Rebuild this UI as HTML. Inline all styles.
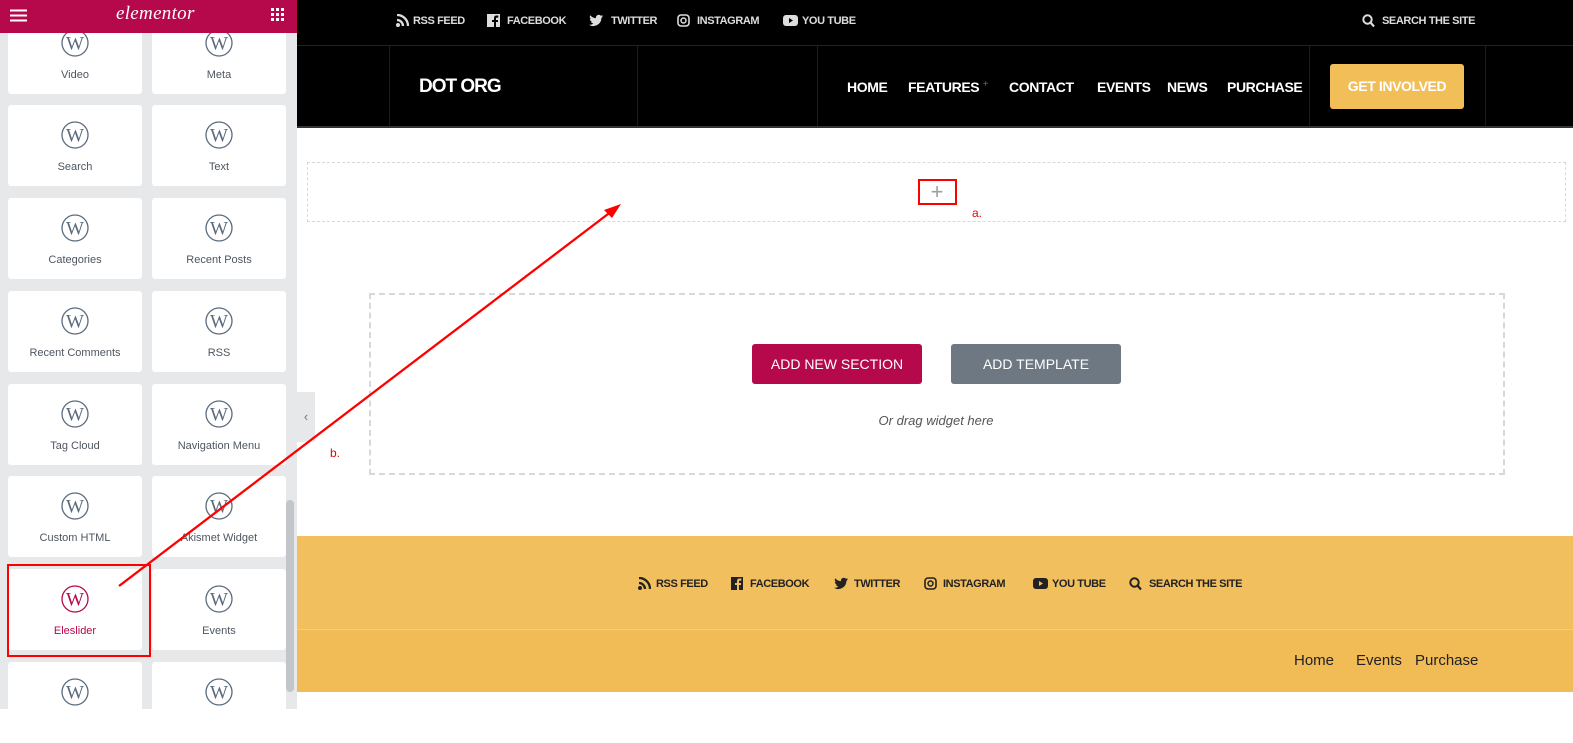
<!DOCTYPE html>
<html><head><meta charset="utf-8"><style>
*{margin:0;padding:0;box-sizing:border-box}
body{width:1573px;height:709px;overflow:hidden;background:#fff;font-family:"Liberation Sans",sans-serif;position:relative}
.a{position:absolute}
.side{left:0;top:0;width:297px;height:709px;background:#e6e8ea}
.hdr{left:0;top:0;width:297px;height:33px;background:#b5094b}
.card{position:absolute;width:134px;height:81px;background:#fff;border-radius:3px;text-align:center;font-size:11px;color:#4e5660}
.card svg{position:absolute;left:53px;top:16px}
.card span{position:absolute;left:0;right:0;top:56px}
.s{position:absolute;font-size:11px;font-weight:bold;letter-spacing:-0.4px;white-space:nowrap}
.tb .s{color:#ddd;top:15px}
.ft .s{color:#222;top:578px}
.ic{position:absolute}
.nav{color:#fff;font-weight:bold;font-size:14px;letter-spacing:-0.4px;position:absolute;top:79px}
</style></head><body>
<!-- header -->
<div class="a" style="left:297px;top:0;width:1276px;height:127px;background:#000"></div>
<div class="a" style="left:297px;top:45px;width:1276px;height:1px;background:#222"></div>
<div class="a" style="left:389px;top:46px;width:1px;height:80px;background:#1c1c1c"></div>
<div class="a" style="left:637px;top:46px;width:1px;height:80px;background:#1c1c1c"></div>
<div class="a" style="left:817px;top:46px;width:1px;height:80px;background:#1c1c1c"></div>
<div class="a" style="left:1309px;top:46px;width:1px;height:80px;background:#1c1c1c"></div>
<div class="a" style="left:1485px;top:46px;width:1px;height:80px;background:#1c1c1c"></div>
<div class="a" style="left:297px;top:126px;width:1276px;height:2px;background:#333"></div>
<div class="tb">
<svg class="ic" style="left:396px;top:14px" width="13" height="13"><circle cx="2" cy="11" r="2" fill="#ddd"/><path d="M1 6a6 6 0 0 1 6 6M1 1a11 11 0 0 1 11 11" stroke="#ddd" stroke-width="2.3" fill="none"/></svg><div class="s" style="left:413px">RSS FEED</div>
<svg class="ic" style="left:487px;top:14px" width="13" height="13"><rect width="13" height="13" fill="#ddd"/><path d="M9 13V8h2V6H9V4.5c0-.6.3-.9 1-.9h1.3V1.5H9.5C7.8 1.5 7 2.5 7 4v2H5v2h2v5z" fill="#000"/></svg><div class="s" style="left:507px">FACEBOOK</div>
<svg class="ic" style="left:589px;top:14px" width="15" height="13"><path d="M14 2c-.5.3-1 .4-1.6.5.6-.4 1-.9 1.2-1.5-.5.3-1.1.5-1.8.7A2.8 2.8 0 0 0 7 4.2 8 8 0 0 1 1.2 1.3a2.8 2.8 0 0 0 .9 3.8c-.5 0-.9-.2-1.3-.4 0 1.4 1 2.5 2.3 2.8-.4.1-.9.1-1.3 0 .4 1.1 1.4 1.9 2.6 2A5.7 5.7 0 0 1 0 10.7 8 8 0 0 0 12.4 4c.6-.4 1.1-1 1.6-2z" fill="#ddd"/></svg><div class="s" style="left:611px">TWITTER</div>
<svg class="ic" style="left:677px;top:14px" width="13" height="13"><rect x="1" y="1" width="11" height="11" rx="3" stroke="#ddd" stroke-width="1.6" fill="none"/><circle cx="6.5" cy="6.5" r="2.5" stroke="#ddd" stroke-width="1.5" fill="none"/></svg><div class="s" style="left:697px">INSTAGRAM</div>
<svg class="ic" style="left:783px;top:15px" width="15" height="11"><rect width="15" height="11" rx="3" fill="#ddd"/><path d="M6 3v5l4-2.5z" fill="#000"/></svg><div class="s" style="left:802px">YOU TUBE</div>
<svg class="ic" style="left:1362px;top:14px" width="13" height="14"><circle cx="5.5" cy="5.5" r="4.2" stroke="#ddd" stroke-width="2" fill="none"/><path d="M8.5 8.5l3.5 4" stroke="#ddd" stroke-width="2.2"/></svg><div class="s" style="left:1382px">SEARCH THE SITE</div>
</div>
<div class="a" style="left:419px;top:76px;color:#fff;font-weight:bold;font-size:19px;letter-spacing:-1px">DOT ORG</div>
<div class="nav" style="left:847px">HOME</div>
<div class="nav" style="left:908px">FEATURES <span style="font-weight:normal;color:#666;font-size:10px;vertical-align:top">+</span></div>
<div class="nav" style="left:1009px">CONTACT</div>
<div class="nav" style="left:1097px">EVENTS</div>
<div class="nav" style="left:1167px">NEWS</div>
<div class="nav" style="left:1227px">PURCHASE</div>
<div class="a" style="left:1330px;top:64px;width:134px;height:45px;background:#f2be58;border-radius:3px;color:#fff;font-weight:bold;font-size:14px;letter-spacing:-0.4px;text-align:center;line-height:45px">GET INVOLVED</div>

<!-- content -->
<div class="a" style="left:307px;top:162px;width:1259px;height:60px;border:1px dashed #d5d8dc"></div>
<div class="a" style="left:918px;top:179px;width:39px;height:26px;border:2px solid #f00"></div>
<div class="a" style="left:926px;top:179px;color:#9aa0a7;font-size:22px;width:22px;text-align:center;line-height:26px">+</div>
<div class="a" style="left:972px;top:206px;color:#e00;font-size:12px">a.</div>
<div class="a" style="left:369px;top:293px;width:1136px;height:182px;border:2px dashed #d5d8dc"></div>
<div class="a" style="left:752px;top:344px;width:170px;height:40px;background:#b5094b;border-radius:3px;color:#fff;font-size:14px;text-align:center;line-height:40px">ADD NEW SECTION</div>
<div class="a" style="left:951px;top:344px;width:170px;height:40px;background:#6d7882;border-radius:3px;color:#fff;font-size:14px;text-align:center;line-height:40px">ADD TEMPLATE</div>
<div class="a" style="left:800px;top:413px;width:272px;text-align:center;color:#555;font-size:13px;font-style:italic">Or drag widget here</div>
<div class="a" style="left:330px;top:446px;color:#e00;font-size:12px">b.</div>

<!-- footer -->
<div class="a" style="left:297px;top:536px;width:1276px;height:93px;background:#f2bf5e"></div>
<div class="a" style="left:297px;top:629px;width:1276px;height:1px;background:#f5cd7c"></div>
<div class="a" style="left:297px;top:630px;width:1276px;height:62px;background:#f1bb56"></div>
<div class="ft">
<svg class="ic" style="left:638px;top:577px" width="13" height="13"><circle cx="2" cy="11" r="2" fill="#222"/><path d="M1 6a6 6 0 0 1 6 6M1 1a11 11 0 0 1 11 11" stroke="#222" stroke-width="2.3" fill="none"/></svg><div class="s" style="left:656px">RSS FEED</div>
<svg class="ic" style="left:731px;top:577px" width="12" height="13"><rect width="12" height="13" fill="#222"/><path d="M8 13V8h2V6H8V4.5c0-.6.3-.9 1-.9h1.3V1.5H8.5C6.8 1.5 6 2.5 6 4v2H4v2h2v5z" fill="#f2bf5e"/></svg><div class="s" style="left:750px">FACEBOOK</div>
<svg class="ic" style="left:834px;top:577px" width="15" height="13"><path d="M14 2c-.5.3-1 .4-1.6.5.6-.4 1-.9 1.2-1.5-.5.3-1.1.5-1.8.7A2.8 2.8 0 0 0 7 4.2 8 8 0 0 1 1.2 1.3a2.8 2.8 0 0 0 .9 3.8c-.5 0-.9-.2-1.3-.4 0 1.4 1 2.5 2.3 2.8-.4.1-.9.1-1.3 0 .4 1.1 1.4 1.9 2.6 2A5.7 5.7 0 0 1 0 10.7 8 8 0 0 0 12.4 4c.6-.4 1.1-1 1.6-2z" fill="#222"/></svg><div class="s" style="left:854px">TWITTER</div>
<svg class="ic" style="left:924px;top:577px" width="13" height="13"><rect x="1" y="1" width="11" height="11" rx="3" stroke="#222" stroke-width="1.6" fill="none"/><circle cx="6.5" cy="6.5" r="2.5" stroke="#222" stroke-width="1.5" fill="none"/></svg><div class="s" style="left:943px">INSTAGRAM</div>
<svg class="ic" style="left:1033px;top:578px" width="15" height="11"><rect width="15" height="11" rx="3" fill="#222"/><path d="M6 3v5l4-2.5z" fill="#f2bf5e"/></svg><div class="s" style="left:1052px">YOU TUBE</div>
<svg class="ic" style="left:1129px;top:577px" width="13" height="14"><circle cx="5.5" cy="5.5" r="4.2" stroke="#222" stroke-width="2" fill="none"/><path d="M8.5 8.5l3.5 4" stroke="#222" stroke-width="2.2"/></svg><div class="s" style="left:1149px">SEARCH THE SITE</div>
</div>
<div class="a" style="left:1294px;top:652px;font-size:15px;color:#222">Home</div>
<div class="a" style="left:1356px;top:652px;font-size:15px;color:#222">Events</div>
<div class="a" style="left:1415px;top:652px;font-size:15px;color:#222">Purchase</div>

<!-- sidebar -->
<div class="a side"></div>
<div class="a" style="left:286px;top:500px;width:8px;height:192px;background:#c2c5c9;border-radius:4px"></div>
<div class="a" style="left:297px;top:392px;width:18px;height:50px;background:#e6e8ea;color:#6d7882;font-size:13px;line-height:50px;text-align:center">‹</div>

<div class="card" style="left:8px;top:13px"><svg width="28" height="28" viewBox="0 0 28 28"><circle cx="14" cy="14" r="13" stroke="#5b6b7d" stroke-width="1.3" fill="none"/><text x="14" y="20.5" text-anchor="middle" font-family="Liberation Serif,serif" font-size="19" fill="#5b6b7d">W</text></svg><span>Video</span></div>
<div class="card" style="left:152px;top:13px"><svg width="28" height="28" viewBox="0 0 28 28"><circle cx="14" cy="14" r="13" stroke="#5b6b7d" stroke-width="1.3" fill="none"/><text x="14" y="20.5" text-anchor="middle" font-family="Liberation Serif,serif" font-size="19" fill="#5b6b7d">W</text></svg><span>Meta</span></div>
<div class="card" style="left:8px;top:105px"><svg width="28" height="28" viewBox="0 0 28 28"><circle cx="14" cy="14" r="13" stroke="#5b6b7d" stroke-width="1.3" fill="none"/><text x="14" y="20.5" text-anchor="middle" font-family="Liberation Serif,serif" font-size="19" fill="#5b6b7d">W</text></svg><span>Search</span></div>
<div class="card" style="left:152px;top:105px"><svg width="28" height="28" viewBox="0 0 28 28"><circle cx="14" cy="14" r="13" stroke="#5b6b7d" stroke-width="1.3" fill="none"/><text x="14" y="20.5" text-anchor="middle" font-family="Liberation Serif,serif" font-size="19" fill="#5b6b7d">W</text></svg><span>Text</span></div>
<div class="card" style="left:8px;top:198px"><svg width="28" height="28" viewBox="0 0 28 28"><circle cx="14" cy="14" r="13" stroke="#5b6b7d" stroke-width="1.3" fill="none"/><text x="14" y="20.5" text-anchor="middle" font-family="Liberation Serif,serif" font-size="19" fill="#5b6b7d">W</text></svg><span>Categories</span></div>
<div class="card" style="left:152px;top:198px"><svg width="28" height="28" viewBox="0 0 28 28"><circle cx="14" cy="14" r="13" stroke="#5b6b7d" stroke-width="1.3" fill="none"/><text x="14" y="20.5" text-anchor="middle" font-family="Liberation Serif,serif" font-size="19" fill="#5b6b7d">W</text></svg><span>Recent Posts</span></div>
<div class="card" style="left:8px;top:291px"><svg width="28" height="28" viewBox="0 0 28 28"><circle cx="14" cy="14" r="13" stroke="#5b6b7d" stroke-width="1.3" fill="none"/><text x="14" y="20.5" text-anchor="middle" font-family="Liberation Serif,serif" font-size="19" fill="#5b6b7d">W</text></svg><span>Recent Comments</span></div>
<div class="card" style="left:152px;top:291px"><svg width="28" height="28" viewBox="0 0 28 28"><circle cx="14" cy="14" r="13" stroke="#5b6b7d" stroke-width="1.3" fill="none"/><text x="14" y="20.5" text-anchor="middle" font-family="Liberation Serif,serif" font-size="19" fill="#5b6b7d">W</text></svg><span>RSS</span></div>
<div class="card" style="left:8px;top:384px"><svg width="28" height="28" viewBox="0 0 28 28"><circle cx="14" cy="14" r="13" stroke="#5b6b7d" stroke-width="1.3" fill="none"/><text x="14" y="20.5" text-anchor="middle" font-family="Liberation Serif,serif" font-size="19" fill="#5b6b7d">W</text></svg><span>Tag Cloud</span></div>
<div class="card" style="left:152px;top:384px"><svg width="28" height="28" viewBox="0 0 28 28"><circle cx="14" cy="14" r="13" stroke="#5b6b7d" stroke-width="1.3" fill="none"/><text x="14" y="20.5" text-anchor="middle" font-family="Liberation Serif,serif" font-size="19" fill="#5b6b7d">W</text></svg><span>Navigation Menu</span></div>
<div class="card" style="left:8px;top:476px"><svg width="28" height="28" viewBox="0 0 28 28"><circle cx="14" cy="14" r="13" stroke="#5b6b7d" stroke-width="1.3" fill="none"/><text x="14" y="20.5" text-anchor="middle" font-family="Liberation Serif,serif" font-size="19" fill="#5b6b7d">W</text></svg><span>Custom HTML</span></div>
<div class="card" style="left:152px;top:476px"><svg width="28" height="28" viewBox="0 0 28 28"><circle cx="14" cy="14" r="13" stroke="#5b6b7d" stroke-width="1.3" fill="none"/><text x="14" y="20.5" text-anchor="middle" font-family="Liberation Serif,serif" font-size="19" fill="#5b6b7d">W</text></svg><span>Akismet Widget</span></div>
<div class="card" style="left:8px;top:569px"><svg width="28" height="28" viewBox="0 0 28 28"><circle cx="14" cy="14" r="13" stroke="#b5094b" stroke-width="1.3" fill="none"/><text x="14" y="20.5" text-anchor="middle" font-family="Liberation Serif,serif" font-size="19" fill="#b5094b">W</text></svg><span style="color:#b5094b">Eleslider</span></div>
<div class="card" style="left:152px;top:569px"><svg width="28" height="28" viewBox="0 0 28 28"><circle cx="14" cy="14" r="13" stroke="#5b6b7d" stroke-width="1.3" fill="none"/><text x="14" y="20.5" text-anchor="middle" font-family="Liberation Serif,serif" font-size="19" fill="#5b6b7d">W</text></svg><span>Events</span></div>
<div class="card" style="left:8px;top:662px"><svg width="28" height="28" viewBox="0 0 28 28"><circle cx="14" cy="14" r="13" stroke="#5b6b7d" stroke-width="1.3" fill="none"/><text x="14" y="20.5" text-anchor="middle" font-family="Liberation Serif,serif" font-size="19" fill="#5b6b7d">W</text></svg></div>
<div class="card" style="left:152px;top:662px"><svg width="28" height="28" viewBox="0 0 28 28"><circle cx="14" cy="14" r="13" stroke="#5b6b7d" stroke-width="1.3" fill="none"/><text x="14" y="20.5" text-anchor="middle" font-family="Liberation Serif,serif" font-size="19" fill="#5b6b7d">W</text></svg></div>

<div class="a hdr"></div>
<svg class="a" style="left:10px;top:9px" width="17" height="13"><path d="M0 1.5h17M0 6.5h17M0 11.5h17" stroke="#fff" stroke-width="2"/></svg>
<div class="a" style="left:116px;top:3px;color:#fff;font-family:'Liberation Serif',serif;font-style:italic;font-size:19px;letter-spacing:0.3px">elementor</div>
<svg class="a" style="left:271px;top:8px" width="14" height="13"><g fill="#fff"><rect x="0" y="0" width="3" height="3"/><rect x="5" y="0" width="3" height="3"/><rect x="10" y="0" width="3" height="3"/><rect x="0" y="5" width="3" height="3"/><rect x="5" y="5" width="3" height="3"/><rect x="10" y="5" width="3" height="3"/><rect x="0" y="10" width="3" height="3"/><rect x="5" y="10" width="3" height="3"/><rect x="10" y="10" width="3" height="3"/></g></svg>
<!-- annotations -->
<div class="a" style="left:7px;top:564px;width:144px;height:93px;border:2px solid #f00"></div>
<svg class="a" style="left:0;top:0" width="1573" height="709"><line x1="119" y1="586" x2="612" y2="211" stroke="#f00" stroke-width="2.3"/><path d="M621 204L604 210L612 218Z" fill="#f00"/></svg>
</body></html>
